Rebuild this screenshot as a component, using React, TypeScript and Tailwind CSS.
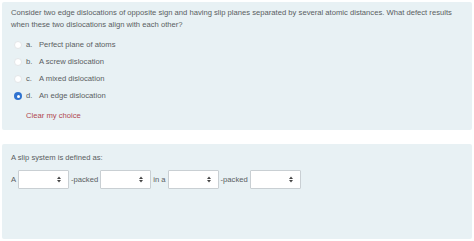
import React from "react";

const Radio = ({ checked }: { checked?: boolean }) =>
  checked ? (
    <span className="w-[8px] h-[8px] rounded-full bg-[#2f73d0] flex items-center justify-center shrink-0">
      <span className="w-[3px] h-[3px] rounded-full bg-white" />
    </span>
  ) : (
    <span className="w-[8px] h-[8px] rounded-full bg-white border border-[#e3e6e8] shrink-0" />
  );

const Select = () => (
  <div className="w-[51px] h-[19px] bg-white border border-[#c9cfd3] rounded-[1px] flex items-center justify-end pr-[7px]">
    <svg width="4" height="7" viewBox="0 0 4 7">
      <path d="M0 3 L2 0.5 L4 3 Z" fill="#444" />
      <path d="M0 4 L2 6.5 L4 4 Z" fill="#444" />
    </svg>
  </div>
);

export default function App() {
  const opts = [
    { l: "a.", t: "Perfect plane of atoms" },
    { l: "b.", t: "A screw dislocation" },
    { l: "c.", t: "A mixed dislocation" },
    { l: "d.", t: "An edge dislocation", c: true },
  ];
  return (
    <div
      className="w-[474px] h-[241px] bg-white text-[#5a5e62] pt-[2px] pl-[2px] pr-[2px]"
      style={{ fontFamily: '"Liberation Sans", Arial, sans-serif', fontSize: "7.65px" }}
    >
      <div className="h-[128px] bg-[#e8f1f4] rounded-[2px] pl-[9px] pt-[5px]">
        <p className="leading-[12px] pr-[10px]">
          Consider two edge dislocations of opposite sign and having slip planes separated by several atomic distances. What defect results when these two dislocations align with each other?
        </p>
        <div className="mt-[10px] flex flex-col gap-[9px] pl-[3px]">
          {opts.map((o) => (
            <div key={o.l} className="flex items-center h-[8px]">
              <Radio checked={o.c} />
              <span className="ml-[4px] w-[13px]">{o.l}</span>
              <span>{o.t}</span>
            </div>
          ))}
        </div>
        <div className="mt-[11px] ml-[15px] text-[#b1474f] leading-[10px]">Clear my choice</div>
      </div>
      <div className="h-[14px]" />
      <div className="h-[95px] bg-[#e8f1f4] rounded-[2px] pl-[9px] pt-[9px]">
        <p className="leading-[10px]">A slip system is defined as:</p>
        <div className="mt-[7px] flex items-center">
          <span className="w-[7px]">A</span>
          <Select />
          <span className="mx-[2px]">-packed</span>
          <Select />
          <span className="mx-[2px]">in a</span>
          <Select />
          <span className="mx-[2px]">-packed</span>
          <Select />
        </div>
      </div>
    </div>
  );
}
